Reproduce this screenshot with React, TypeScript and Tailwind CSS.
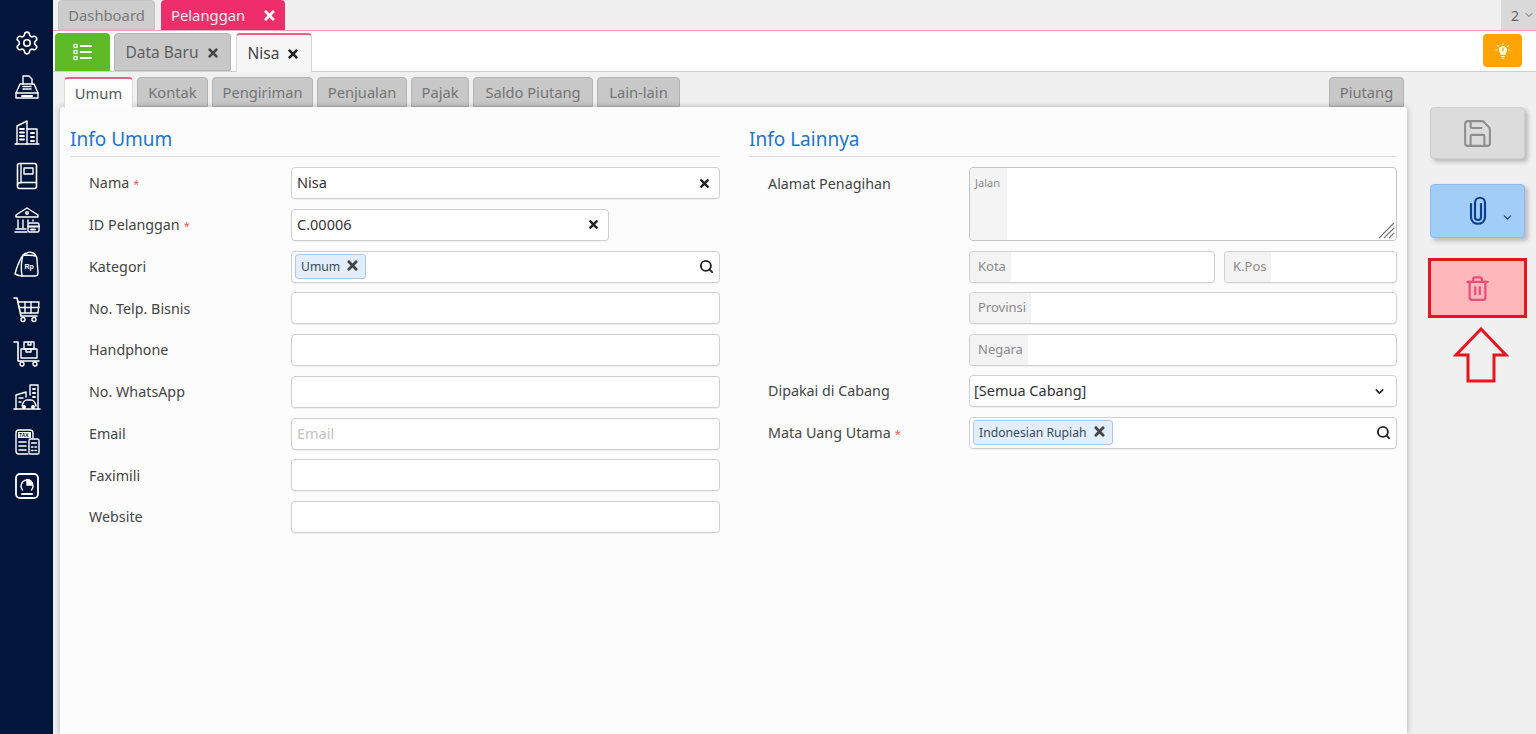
import React from "react";
import { Settings, Save, Trash2, ChevronDown, Search } from "lucide-react";
import { FaTimes } from "react-icons/fa";

const Ico = ({ children }: { children: React.ReactNode }) => (
  <svg width="28" height="28" viewBox="0 0 28 28" fill="none" stroke="white" strokeWidth="1.4" strokeLinejoin="round" strokeLinecap="round">
    {children}
  </svg>
);

const sideIcons = [
  <Settings key="a" size={26} color="white" strokeWidth={1.5} />,
  <Ico key="b">
    <path d="M10 11V3h6l3 3v5" />
    <path d="M7 11h14l4 9v5H3v-5z" />
    <path d="M3 20h22" />
    <path d="M9 23h10" strokeWidth="2" />
    <path d="M10 13.500h8M10 16h8" strokeDasharray="2 1" strokeWidth="1.600" />
  </Ico>,
  <Ico key="c">
    <path d="M2 26h24" />
    <path d="M4 26V8l10-5v23" />
    <path d="M14 11h10v15" />
    <path d="M7 11h4M7 14.500h4M7 18h4M7 21.500h4" strokeWidth="1.800" />
    <path d="M18 15h3M18 19h3M18 23h3" strokeWidth="1.800" />
  </Ico>,
  <Ico key="d">
    <rect x="4.500" y="1.500" width="19" height="25" rx="2" strokeWidth="1.600" />
    <path d="M8 2v19M4.500 23c0-2 1.500-2.500 3-2.500h16" />
    <rect x="11" y="6" width="9" height="6" />
  </Ico>,
  <Ico key="e">
    <path d="M3 9 14 2l11 7v2H3z" />
    <circle cx="14" cy="7" r="1.300" />
    <path d="M5 14v8M10 14v8M15 14v3M20 14v1" />
    <path d="M2 26h12M3 23h10" />
    <rect x="15" y="17" width="11" height="9" rx="1.500" fill="#03153b" />
    <path d="M15 20.500h11M18 23.500h4" strokeWidth="1.800" />
  </Ico>,
  <Ico key="f">
    <path d="M10 5C7 9 3 19 2 24c2 1 4 2 7 2h13c2 0 3-1 3-3l-1-13c0-3-2-6-4-7-2-1-5-1-6 0-1 0-3 1-4 2z" />
    <path d="M9 26c-1-6-1-14 1-21 4 0 9 0 12 1" />
    <text x="11.500" y="19" fontSize="7" fontWeight="700" fill="white" stroke="none" fontFamily="Liberation Sans, sans-serif">Rp</text>
  </Ico>,
  <Ico key="g">
    <path d="M1 3h3l4 18h16" strokeWidth="1.600" />
    <path d="M5 7h21l-1 11H7.500" />
    <path d="M12 7v11M18 7v11M6 12.500h20" />
    <circle cx="10" cy="24.500" r="2" />
    <circle cx="21" cy="24.500" r="2" />
  </Ico>,
  <Ico key="h">
    <path d="M1 3h4v19h21" strokeWidth="1.600" />
    <rect x="11" y="3" width="10" height="7" />
    <path d="M15 3v3h3V3" />
    <rect x="8" y="10" width="16" height="9" />
    <path d="M13 10v3h5v-3" />
    <circle cx="9" cy="25" r="2" />
    <circle cx="22" cy="25" r="2" />
  </Ico>,
  <Ico key="i">
    <path d="M1 26h26" strokeWidth="1.600" />
    <path d="M3 26V12l10-3v5" />
    <path d="M17 12V2h8v24" />
    <path d="M20 6h2M20 10h2M20 14h2" strokeWidth="1.800" />
    <path d="M6 15h4M6 19h2" />
    <path d="M9 23c1-4 3-6 5-6h4c2 0 4 2 5 6" fill="#03153b" />
    <circle cx="11" cy="24" r="2" fill="white" stroke="none" />
    <circle cx="20" cy="24" r="2" fill="white" stroke="none" />
  </Ico>,
  <Ico key="j">
    <path d="M15 26H6c-2 0-3-1-3-3V5c0-2 1-3 3-3h11c2 0 3 1 3 3v5" />
    <rect x="5" y="4" width="13" height="6" fill="white" stroke="none" />
    <text x="6" y="9" fontSize="5" fontWeight="700" fill="#03153b" stroke="none" fontFamily="Liberation Sans, sans-serif">TAX</text>
    <path d="M6 14h7M6 18h7M6 22h7" strokeWidth="1.600" />
    <rect x="16" y="11" width="10" height="15" rx="1.500" />
    <path d="M18.500 15h5" />
    <path d="M18.500 19h1.500M22 19h1.500M18.500 22.500h1.500M22 22.500h1.500" strokeWidth="1.600" />
  </Ico>,
  <Ico key="k">
    <rect x="3" y="2" width="22" height="24" rx="4" strokeWidth="1.800" />
    <path d="M9.500 18a6 6 0 1 1 9 0" />
    <path d="M14 7.500a5.500 5.500 0 0 1 5.500 5.500H14z" fill="white" />
    <path d="M9 22h10" strokeWidth="2" />
  </Ico>,
];

const Clip = () => (
  <svg width="24" height="30" viewBox="0 0 20 30" fill="none" stroke="#0d3f8f" strokeWidth="2.200" strokeLinecap="round">
    <path d="M3 8v13c0 9 14 9 14 0V7C17 0 7 0 7 7v14c0 4 6 4 6 0V8" />
  </svg>
);

const ListIcon = () => (
  <svg width="20" height="18" viewBox="0 0 20 18" fill="none" stroke="white">
    <rect x="1" y="1.500" width="3" height="3" strokeWidth="1.200" />
    <rect x="1" y="7.500" width="3" height="3" strokeWidth="1.200" />
    <rect x="1" y="13.500" width="3" height="3" strokeWidth="1.200" />
    <path d="M7 3h12M7 9h12M7 15h12" strokeWidth="2" />
  </svg>
);

const Bulb = () => (
  <svg width="18" height="18" viewBox="0 0 18 18" fill="none" stroke="#fff6d8" strokeWidth="1.200" strokeLinecap="round">
    <path d="M5.500 8a3.500 3.500 0 0 1 7 0c0 1.800-1.400 2.600-1.600 4.500H7.100C6.900 10.600 5.500 9.800 5.500 8z" fill="#fff6d8" />
    <path d="M7.500 14.500h3M8 16h2" />
    <path d="M9 1.500v1M3.500 3.500l.8.8M14.500 3.500l-.8.8M2 8h1M15 8h1" />
    <path d="M9 6v3" stroke="#ffa405" />
  </svg>
);

const Arrow = () => (
  <svg width="56" height="57" viewBox="0 0 56 57" fill="none" stroke="#e8151f" strokeWidth="3">
    <path d="M28 2 3 28h12v26h26V28h12z" />
  </svg>
);

const Tab = ({ label, w, active }: { label: string; w: string; active?: boolean }) => (
  <div className={active ? "h-[31px] z-10 flex items-center justify-center rounded-t-[4px] border-t-2 border-x border-t-[#ec5f8b] border-x-[#dcdcdc] bg-[#fdfdfd] text-[#4d5a5f] text-[14.700px] " + w : "h-[30px] flex items-center justify-center rounded-t-[4px] border border-[#b4b4b4] bg-[#c8c8c8] text-[#757575] text-[14.700px] " + w}>
    {label}
  </div>
);

const Field = ({ label, req, w, children }: { label: string; req?: boolean; w?: string; children: React.ReactNode }) => (
  <div className="flex h-[32px] items-center">
    <div className="w-[221px] pl-[19px] text-[14.300px] text-[#444]">
      {label}
      {req && <span className="ml-[4px] text-[11px] text-[#ee5a5a]">*</span>}
    </div>
    <div className={w ?? "flex-1"}>{children}</div>
  </div>
);

const Box = ({ children, cls }: { children?: React.ReactNode; cls?: string }) => (
  <div className={"flex h-[32px] items-center rounded-[4px] border border-[#d0d0d0] bg-white shadow-[0_1px_1px_rgba(0,0,0,0.05)] " + (cls ?? "")}>{children}</div>
);

const Chip = ({ label }: { label: string }) => (
  <div className="ml-[3px] flex h-[25px] items-center gap-[5px] rounded-[3px] border border-[#a8c8ee] bg-[#e2eefc] pl-[5px] pr-[5px] pt-[1px] text-[12.200px] text-[#3d4a55]">
    {label}
    <FaTimes size={15} color="#444" className="-mt-[4px]" />
  </div>
);

const Addon = ({ label, w }: { label: string; w?: string }) => (
  <Box cls="flex-1">
    <div className={"flex h-full items-center rounded-l-[4px] bg-[#f3f3f3] pl-[8px] text-[13px] text-[#8a8a8a] " + (w ?? "")}>{label}</div>
  </Box>
);

export default function App() {
  return (
    <div className="flex h-[734px] w-[1536px] overflow-hidden bg-[#f0f0f0] font-['Noto_Sans','Open_Sans',sans-serif]">
      <aside className="flex h-full w-[53px] shrink-0 flex-col items-center gap-[16.300px] bg-[#03153b] pt-[29px]">
        {sideIcons.map((ic, i) => (
          <div key={i} className="flex h-[28px] w-[28px] items-center justify-center">{ic}</div>
        ))}
      </aside>
      <div className="flex min-w-0 flex-1 flex-col">
        <div className="flex h-[31px] items-end border-b border-[#f0a3bd] bg-[#f0f0f0] pl-[5px]">
          <div className="flex h-[30px] w-[97px] items-center justify-center rounded-t-[4px] border border-[#c4c4c4] bg-[#cdcdcd] text-[14.800px] text-[#7a7a7a]">Dashboard</div>
          <div className="ml-[6px] flex h-[30px] w-[124px] items-center justify-between rounded-t-[4px] bg-[#ee2e6b] pl-[10px] pr-[8px] text-[14.800px] text-[#fdeaf0]">
            Pelanggan
            <FaTimes size={15} color="white" />
          </div>
          <div className="ml-auto flex h-[30px] w-[35px] items-center justify-end gap-[4px] bg-[#d9d9d9] pr-[1px] text-[14px] text-[#666]">
            2<ChevronDown size={12} />
          </div>
        </div>
        <div className="flex h-[41px] items-end border-b border-[#cfcfcf] bg-[#fefefe] pl-[2px]">
          <div className="flex h-[38px] w-[55px] items-center justify-center rounded-t-[4px] bg-[#5eba26]"><ListIcon /></div>
          <div className="ml-[4px] flex h-[38px] w-[117px] items-center justify-center gap-[7px] rounded-t-[4px] border border-[#b4b4b4] bg-[#c8c8c8] pt-[1px] text-[15.500px] text-[#5f5f5f]">
            Data Baru
            <FaTimes size={14} color="#444" />
          </div>
          <div className="z-10 ml-[5px] -mb-px flex h-[39px] w-[76px] items-center justify-center gap-[7px] rounded-t-[4px] border-x border-t-2 border-x-[#d5d5d5] border-t-[#ec5f8b] bg-[#f6f6f6] text-[15.500px] text-[#444]">
            Nisa
            <FaTimes size={14} color="#222" />
          </div>
          <div className="mb-[4px] ml-auto mr-[14px] flex h-[33px] w-[39px] items-center justify-center rounded-[4px] bg-[#ffa405]">
            <Bulb />
          </div>
        </div>
        <div className="flex min-h-0 flex-1">
          <div className="ml-[7px] flex w-[1347px] shrink-0 flex-col">
            <div className="flex items-end gap-[4px] pl-[4px] pr-[3px] pt-[5px]">
              <Tab label="Umum" w="w-[69px] -mb-px" active />
              <Tab label="Kontak" w="w-[71px]" />
              <Tab label="Pengiriman" w="w-[101px]" />
              <Tab label="Penjualan" w="w-[90px]" />
              <Tab label="Pajak" w="w-[58px]" />
              <Tab label="Saldo Piutang" w="w-[120px]" />
              <Tab label="Lain-lain" w="w-[83px]" />
              <div className="ml-auto"><Tab label="Piutang" w="w-[75px]" /></div>
            </div>
            <div className="flex flex-1 gap-[29px] rounded-t-[3px] bg-[#fcfcfc] pl-[10px] pr-[10px] shadow-[0_0_6px_rgba(0,0,0,0.28)]">
              <section className="w-[650px]">
                <h2 className="mb-[10px] flex h-[50px] items-end border-b border-[#dddddd] pb-[3px] text-[19px] text-[#2274cf]">Info Umum</h2>
                <div className="flex flex-col gap-[9.750px]">
                  <Field label="Nama" req>
                    <Box cls="justify-between pl-[5px] pr-[8px] text-[14.500px] text-[#333]">Nisa<FaTimes size={13} color="#222" /></Box>
                  </Field>
                  <Field label="ID Pelanggan" req w="w-[318px]">
                    <Box cls="justify-between pl-[5px] pr-[8px] text-[14.500px] text-[#333]">C.00006<FaTimes size={13} color="#222" /></Box>
                  </Field>
                  <Field label="Kategori">
                    <Box cls="justify-between pr-[5px]"><Chip label="Umum" /><Search size={15} color="#222" strokeWidth={3} /></Box>
                  </Field>
                  <Field label="No. Telp. Bisnis"><Box /></Field>
                  <Field label="Handphone"><Box /></Field>
                  <Field label="No. WhatsApp"><Box /></Field>
                  <Field label="Email"><Box cls="pl-[5px] text-[14.500px] text-[#c4c4c4]">Email</Box></Field>
                  <Field label="Faximili"><Box /></Field>
                  <Field label="Website"><Box /></Field>
                </div>
              </section>
              <section className="w-[648px]">
                <h2 className="mb-[10px] flex h-[50px] items-end border-b border-[#dddddd] pb-[3px] text-[19px] text-[#2274cf]">Info Lainnya</h2>
                <div className="flex flex-col gap-[9.500px]">
                  <div className="flex h-[74px]">
                    <div className="w-[220px] pl-[19px] pt-[6px] text-[14.300px] text-[#444]">Alamat Penagihan</div>
                    <div className="relative flex-1 rounded-[4px] border border-[#c4c4c4] bg-white">
                      <div className="flex h-full w-[37px] rounded-l-[4px] bg-[#f4f4f4] pl-[5px] pt-[7px] text-[11px] leading-[16px] text-[#8a8a8a]">Jalan</div>
                      <svg className="absolute bottom-[1px] right-[1px]" width="18" height="18" viewBox="0 0 18 18" stroke="#777" strokeWidth="1.200">
                        <path d="M2 17 17 2M7 17 17 7M12 17l5-5" />
                      </svg>
                    </div>
                  </div>
                  <div className="ml-[220px] flex gap-[9px]">
                    <Addon label="Kota" w="w-[41px]" />
                    <div className="flex w-[173px]"><Addon label="K.Pos" w="w-[46px]" /></div>
                  </div>
                  <div className="ml-[220px] flex"><Addon label="Provinsi" w="w-[61px]" /></div>
                  <div className="ml-[220px] flex"><Addon label="Negara" w="w-[58px]" /></div>
                  <div className="flex h-[32px] items-center">
                    <div className="w-[220px] pl-[19px] text-[14.300px] text-[#444]">Dipakai di Cabang</div>
                    <Box cls="flex-1 justify-between pl-[4px] pr-[10px] text-[14.500px] text-[#333]">[Semua Cabang]<ChevronDown size={13} color="#222" strokeWidth={3} /></Box>
                  </div>
                  <div className="flex h-[32px] items-center">
                    <div className="w-[220px] pl-[19px] text-[14.300px] text-[#444]">Mata Uang Utama<span className="ml-[4px] text-[11px] text-[#ee5a5a]">*</span></div>
                    <Box cls="flex-1 justify-between pr-[5px]"><Chip label="Indonesian Rupiah" /><Search size={15} color="#222" strokeWidth={3} /></Box>
                  </div>
                </div>
              </section>
            </div>
          </div>
          <div className="flex flex-1 flex-col items-start pl-[23px] pt-[35px]">
            <button className="flex h-[52px] w-[95px] items-center justify-center rounded-[4px] border border-[#cfcfcf] bg-[#dcdcdc] shadow-[3px_3px_4px_rgba(0,0,0,0.22)]">
              <Save size={33} color="#8e8e8e" strokeWidth={1.500} />
            </button>
            <button className="relative mt-[25px] flex h-[54px] w-[95px] items-center justify-center rounded-[4px] border border-[#8ebcf0] bg-[#a3cdf9] shadow-[3px_3px_4px_rgba(0,0,0,0.22)]">
              <Clip />
              <ChevronDown size={13} color="#0d3f8f" className="absolute right-[10px] top-[26px]" />
            </button>
            <button className="-ml-[2px] mt-[20px] flex h-[60px] w-[99px] items-center justify-center border-[3px] border-[#e8151f] bg-[#fdb8bc]">
              <Trash2 size={27} color="#ee4b7b" strokeWidth={2} />
            </button>
            <div className="ml-[23px] mt-[9px]"><Arrow /></div>
          </div>
        </div>
      </div>
    </div>
  );
}
